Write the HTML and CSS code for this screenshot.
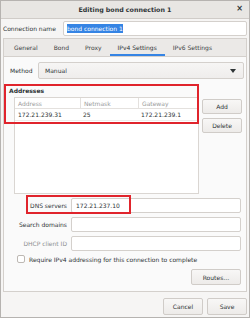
FILE: index.html
```html
<!DOCTYPE html>
<html lang="en">
<head>
    <meta charset="UTF-8">
    <title>Editing bond connection 1</title>
    <link rel="stylesheet" href="styles.css">
</head>
<body>
    <div class="window">
        <header class="titlebar">
            <span class="title">Editing bond connection 1</span>
            <span class="close">&#215;</span>
        </header>

        <div class="conn-row">
            <label>Connection name</label>
            <div class="entry"><span class="selected">bond connection 1</span></div>
        </div>

        <div class="notebook">
            <nav class="tabs">
                <span class="tab">General</span>
                <span class="tab">Bond</span>
                <span class="tab">Proxy</span>
                <span class="tab active">IPv4 Settings</span>
                <span class="tab">IPv6 Settings</span>
            </nav>

            <div class="page">
                <div class="method-row">
                    <label>Method</label>
                    <div class="combo">
                        <span>Manual</span>
                        <svg width="6" height="4" viewBox="0 0 6 4"><path d="M0 0h6L3 4z" fill="#2e3436"/></svg>
                    </div>
                </div>

                <div class="addresses">
                    <h4>Addresses</h4>
                    <div class="addr-body">
                        <div class="table">
                            <div class="trow thead">
                                <span>Address</span><span>Netmask</span><span>Gateway</span>
                            </div>
                            <div class="trow">
                                <span>172.21.239.31</span><span>25</span><span>172.21.239.1</span>
                            </div>
                        </div>
                        <div class="side-buttons">
                            <button>Add</button>
                            <button>Delete</button>
                        </div>
                    </div>
                    <div class="mark mark-addr"></div>
                </div>

                <div class="fields">
                    <label>DNS servers</label>
                    <div class="entry">172.21.237.10</div>
                    <label>Search domains</label>
                    <div class="entry"></div>
                    <label class="disabled">DHCP client ID</label>
                    <div class="entry"></div>
                    <div class="mark mark-dns"></div>
                </div>

                <div class="check-row">
                    <span class="checkbox"></span>
                    <span>Require IPv4 addressing for this connection to complete</span>
                </div>

                <div class="routes-row">
                    <button class="routes">Routes&hellip;</button>
                </div>
            </div>
        </div>

        <footer class="actions">
            <button>Cancel</button>
            <button>Save</button>
        </footer>
    </div>
</body>
</html>
```

FILE: styles.css
```css
* {
    box-sizing: border-box;
    margin: 0;
    padding: 0;
}

html, body {
    width: 250px;
    height: 318px;
    overflow: hidden;
}

body {
    font-family: "DejaVu Sans", sans-serif;
    font-size: 6px;
    color: #2e3436;
    background: #ffffff;
}

.window {
    width: 250px;
    height: 318px;
    background: #f6f5f4;
    border: 1px solid #b6b3b0;
    display: flex;
    flex-direction: column;
}

.titlebar {
    height: 18px;
    flex-shrink: 0;
    background: #e8e6e3;
    border-bottom: 1px solid #d0ccc8;
    display: flex;
    align-items: center;
    justify-content: center;
    position: relative;
}

.title {
    font-weight: bold;
    font-size: 6.3px;
}

.close {
    position: absolute;
    right: 6px;
    top: 3px;
    font-size: 8px;
    font-weight: bold;
    color: #2e3436;
}

.conn-row {
    display: flex;
    align-items: center;
    height: 17px;
    margin-top: 1px;
    padding: 0 2px 0 2px;
}

.conn-row label {
    width: 60px;
}

.entry {
    flex: 1;
    height: 15px;
    background: #ffffff;
    border: 1px solid #d4d0cc;
    border-radius: 2px;
    display: flex;
    align-items: center;
    padding-left: 3px;
}

.selected {
    background: #3584e4;
    color: #ffffff;
    padding: 1px 0;
}

.notebook {
    margin: 1px 2px 0 2px;
    height: 254px;
    border: 1px solid #d4d0cc;
    background: #fafafa;
    display: flex;
    flex-direction: column;
}

.tabs {
    height: 18px;
    flex-shrink: 0;
    background: #ebe9e7;
    border-bottom: 1px solid #d4d0cc;
    display: flex;
    padding-left: 1px;
}

.tab {
    padding: 0 8px;
    display: flex;
    align-items: center;
    color: #3d4244;
}

.tab:first-child {
    padding-left: 9px;
}

.tab.active {
    box-shadow: inset 0 -2px 0 #3584e4;
    color: #2e3436;
}

.page {
    flex: 1;
    display: flex;
    flex-direction: column;
    position: relative;
}

.method-row {
    display: flex;
    align-items: center;
    margin: 5px 2px 0 6px;
    height: 17px;
}

.method-row label {
    width: 28px;
}

.combo {
    flex: 1;
    height: 17px;
    border: 1px solid #d4d0cc;
    border-radius: 2px;
    background: linear-gradient(#f6f5f4, #efedec);
    display: flex;
    align-items: center;
    justify-content: space-between;
    padding: 0 7px 0 6px;
}

.addresses {
    position: relative;
    margin-top: 5px;
}

.addresses h4 {
    font-size: 6px;
    font-weight: bold;
    margin: 3px 0 0 5px;
    height: 8px;
    line-height: 8px;
}

.addr-body {
    display: flex;
    margin: 2px 0 0 10px;
}

.table {
    width: 185px;
    height: 97px;
    background: #ffffff;
    border: 1px solid #dad6d2;
}

.trow {
    display: grid;
    grid-template-columns: 65px 58px 1fr;
    height: 11px;
    align-items: center;
}

.trow span {
    padding-left: 3px;
}

.thead {
    color: #9a9b9b;
    border-bottom: 1px solid #e4e1de;
}

.thead span + span {
    border-left: 1px solid #e4e1de;
    height: 11px;
    line-height: 11px;
}

.trow:not(.thead) {
    height: 12px;
    border-bottom: 1px solid #eeecea;
}

.side-buttons {
    display: flex;
    flex-direction: column;
    gap: 4px;
    margin: 2px 0 0 3px;
}

button {
    font-family: "DejaVu Sans", sans-serif;
    font-size: 6px;
    color: #2e3436;
    background: linear-gradient(#f8f7f6, #edebe9);
    border: 1px solid #d0ccc8;
    border-radius: 2px;
    height: 15px;
}

.side-buttons button {
    width: 40px;
}

.mark {
    position: absolute;
    border: 2px solid #e0242c;
    pointer-events: none;
}

.mark-addr {
    left: 0;
    top: 0;
    width: 195px;
    height: 40px;
}

.fields {
    position: relative;
    display: grid;
    grid-template-columns: 59px 1fr;
    column-gap: 4px;
    row-gap: 4px;
    align-items: center;
    margin: 4px 5px 0 4px;
}

.fields label {
    text-align: right;
}

.fields .entry {
    height: 15px;
    padding-left: 4px;
}

.fields .disabled {
    color: #8c8f90;
}

.mark-dns {
    left: 18px;
    top: -3px;
    width: 105px;
    height: 19px;
}

.check-row {
    display: flex;
    align-items: center;
    gap: 4px;
    margin: 4px 0 0 13px;
}

.checkbox {
    width: 8px;
    height: 8px;
    border: 1px solid #bdb8b3;
    border-radius: 2px;
    background: #ffffff;
}

.routes-row {
    display: flex;
    justify-content: flex-end;
    margin: 6px 5px 0 0;
}

.routes {
    width: 50px;
    height: 16px;
}

.actions {
    flex: 1;
    display: flex;
    justify-content: flex-end;
    align-items: center;
    gap: 4px;
    padding: 4px 2px 0 0;
}

.actions button {
    width: 40px;
    height: 17px;
}
```
